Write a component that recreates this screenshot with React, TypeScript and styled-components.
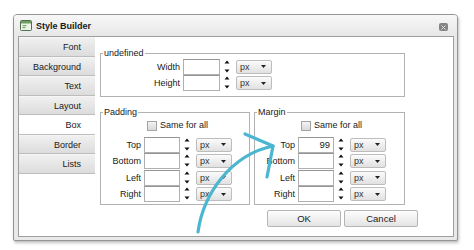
import React from 'react';
import styled, { createGlobalStyle } from 'styled-components';

const GlobalStyle = createGlobalStyle`
  html, body {
    margin: 0;
    padding: 0;
    background: #fff;
  }
  body {
    font-family: "Liberation Sans", Arial, sans-serif;
    font-size: 9px;
    color: #1a1a1a;
  }
`;

const Stage = styled.div`
  position: relative;
  width: 474px;
  height: 250px;
  padding: 14px 0 0 13px;
  box-sizing: border-box;
  overflow: hidden;
`;

const Dialog = styled.div`
  width: 445px;
  height: 227px;
  box-sizing: border-box;
  border: 1px solid #959595;
  border-radius: 4px 4px 2px 2px;
  background: #e9e9e9;
  box-shadow: 1px 2px 3px rgba(0, 0, 0, 0.25);
  display: flex;
  flex-direction: column;
`;

const TitleBar = styled.div`
  height: 21px;
  flex: none;
  display: flex;
  align-items: center;
  gap: 4px;
  padding: 0 9px 0 6px;
  background: linear-gradient(#f7f7f7, #e7e7e7);
  border-radius: 3px 3px 0 0;
`;

const Title = styled.span`
  font-weight: bold;
  font-size: 9px;
  color: #1a1a1a;
  flex: 1;
`;

const CloseButton = styled.div`
  width: 9px;
  height: 8px;
  margin-top: 3px;
  border-radius: 2px;
  background: #858585;
  display: flex;
  align-items: center;
  justify-content: center;
`;

const Body = styled.div`
  flex: 1;
  margin: 0 3px 3px 4px;
  border: 1px solid #9e9e9e;
  background: #fff;
  display: flex;
`;

const TabList = styled.div`
  width: 76px;
  flex: none;
  display: flex;
  flex-direction: column;
`;

const Tab = styled.div<{ $active?: boolean }>`
  height: 19.5px;
  box-sizing: border-box;
  padding-right: 14px;
  text-align: right;
  line-height: 18px;
  font-size: 9px;
  color: #1a1a1a;
  border-bottom: 1px solid #bdbdbd;
  border-top: 1px solid ${(p) => (p.$active ? '#fff' : '#f6f6f6')};
  background: ${(p) => (p.$active ? '#fff' : 'linear-gradient(#f0f0f0, #dcdcdc)')};
`;

const Panel = styled.div`
  padding: 10.5px 0 0 5px;
  display: flex;
  flex-direction: column;
`;

const Group = styled.fieldset<{ $width: number; $bottom?: number }>`
  margin: 0;
  width: ${(p) => p.$width}px;
  box-sizing: border-box;
  min-width: 0;
  border: 1px solid #b2b2b2;
  padding: 0 3px ${(p) => p.$bottom ?? 1.5}px 3px;
`;

const Legend = styled.legend`
  padding: 0 1px;
  margin-left: -1px;
  font-size: 9px;
  line-height: 11px;
  color: #1a1a1a;
`;

const GroupRow = styled.div`
  display: flex;
  gap: 4px;
  margin-top: 9.5px;
`;

const FieldRow = styled.div`
  height: 16.5px;
  display: flex;
  align-items: center;
`;

const Label = styled.span<{ $width: number }>`
  width: ${(p) => p.$width}px;
  flex: none;
  text-align: right;
  font-size: 9px;
  color: #1a1a1a;
`;

const Input = styled.input<{ $width?: number }>`
  width: ${(p) => p.$width ?? 36}px;
  height: 16px;
  box-sizing: border-box;
  margin: 0 0 0 3px;
  padding: 0 3px;
  border: 1px solid #b0b0b0;
  border-top-color: #959595;
  background: #fff;
  font-family: inherit;
  font-size: 9.5px;
  color: #1a1a1a;
  text-align: right;
  outline: none;
`;

const Spinner = styled.div`
  width: 8px;
  height: 16px;
  margin-left: 3px;
  display: flex;
`;

const Select = styled.div`
  width: 36px;
  height: 14px;
  box-sizing: border-box;
  margin-left: 5px;
  padding: 0 5px 0 3px;
  border: 1px solid #bdbdbd;
  border-radius: 2px;
  background: linear-gradient(#fbfbfb, #e1e1e1);
  display: flex;
  align-items: center;
  justify-content: space-between;
  font-size: 9px;
  color: #333;
`;

const CheckRow = styled.label`
  height: 19px;
  display: flex;
  align-items: flex-start;
  gap: 3px;
  padding-left: 43px;
  font-size: 9px;
  color: #1a1a1a;
`;

const CheckBox = styled.span`
  width: 10px;
  height: 10px;
  margin-top: 3.5px;
  box-sizing: border-box;
  border: 1px solid #a3a3a3;
  background: linear-gradient(#f3f3f3, #d9d9d9);
`;

const CheckText = styled.span`
  line-height: 11px;
  margin-top: 2.5px;
`;

const ButtonRow = styled.div`
  display: flex;
  gap: 3px;
  margin-top: 5px;
  padding-left: 167px;
`;

const Button = styled.div`
  width: 74px;
  height: 17px;
  box-sizing: border-box;
  border: 1px solid #b5b5b5;
  border-radius: 2px;
  background: linear-gradient(#fdfdfd, #e4e4e4);
  display: flex;
  align-items: center;
  justify-content: center;
  font-size: 9.5px;
  color: #1a1a1a;
`;

const Overlay = styled.svg`
  position: absolute;
  left: 0;
  top: 0;
  pointer-events: none;
`;

function WindowIcon() {
  return (
    <svg width="12" height="11" viewBox="0 0 12 11">
      <rect x="0.5" y="0.5" width="11" height="10" rx="1" fill="#eef4ea" stroke="#4f6f4f" />
      <rect x="1" y="1" width="10" height="2.5" fill="#6e9f5e" />
      <rect x="2.5" y="5" width="4" height="1.2" fill="#7aa86a" />
      <rect x="2.5" y="7" width="3" height="1.2" fill="#7aa86a" />
    </svg>
  );
}

function SpinArrows() {
  return (
    <Spinner>
      <svg width="8" height="16" viewBox="0 0 8 16">
        <path d="M4 1.5 L6.5 4.5 L1.5 4.5 Z" fill="#111" />
        <path d="M1.5 10.5 L6.5 10.5 L4 13.5 Z" fill="#111" />
      </svg>
    </Spinner>
  );
}

function UnitSelect() {
  return (
    <Select>
      <span>px</span>
      <svg width="5" height="3" viewBox="0 0 5 3">
        <path d="M0 0 L5 0 L2.5 3 Z" fill="#222" />
      </svg>
    </Select>
  );
}

function Field({ label, labelWidth, value, inputWidth }: { label: string; labelWidth: number; value?: string; inputWidth?: number }) {
  return (
    <FieldRow>
      <Label $width={labelWidth}>{label}</Label>
      <Input $width={inputWidth} value={value ?? ''} readOnly />
      <SpinArrows />
      <UnitSelect />
    </FieldRow>
  );
}

function BoxGroup({ title, width, values }: { title: string; width: number; values: Record<string, string> }) {
  return (
    <Group $width={width}>
      <Legend>{title}</Legend>
      <CheckRow>
        <CheckBox />
        <CheckText>Same for all</CheckText>
      </CheckRow>
      {['Top', 'Bottom', 'Left', 'Right'].map((side) => (
        <Field key={side} label={side} labelWidth={37} value={values[side]} />
      ))}
    </Group>
  );
}

const tabs = ['Font', 'Background', 'Text', 'Layout', 'Box', 'Border', 'Lists'];

export default function App() {
  return (
    <Stage>
      <GlobalStyle />
      <Dialog>
        <TitleBar>
          <WindowIcon />
          <Title>Style Builder</Title>
          <CloseButton>
            <svg width="5" height="5" viewBox="0 0 5 5">
              <path d="M0.5 0.5 L4.5 4.5 M4.5 0.5 L0.5 4.5" stroke="#d8d8d8" strokeWidth="1" />
            </svg>
          </CloseButton>
        </TitleBar>
        <Body>
          <TabList>
            {tabs.map((t) => (
              <Tab key={t} $active={t === 'Box'}>
                {t}
              </Tab>
            ))}
          </TabList>
          <Panel>
            <Group $width={305} $bottom={4.5}>
              <Legend>undefined</Legend>
              <Field label="Width" labelWidth={76} inputWidth={37} />
              <Field label="Height" labelWidth={76} inputWidth={37} />
            </Group>
            <GroupRow>
              <BoxGroup title="Padding" width={150} values={{}} />
              <BoxGroup title="Margin" width={151} values={{ Top: '99' }} />
            </GroupRow>
            <ButtonRow>
              <Button>OK</Button>
              <Button>Cancel</Button>
            </ButtonRow>
          </Panel>
        </Body>
      </Dialog>
      <Overlay width="474" height="250" viewBox="0 0 474 250">
        <g fill="none" stroke="#4ab6d0" strokeWidth="3.2" strokeLinecap="round" strokeLinejoin="round">
          <path d="M198 232 C203 195 230 155 273 146" />
          <path d="M245 134 L273 146 L267 177" />
        </g>
      </Overlay>
    </Stage>
  );
}
